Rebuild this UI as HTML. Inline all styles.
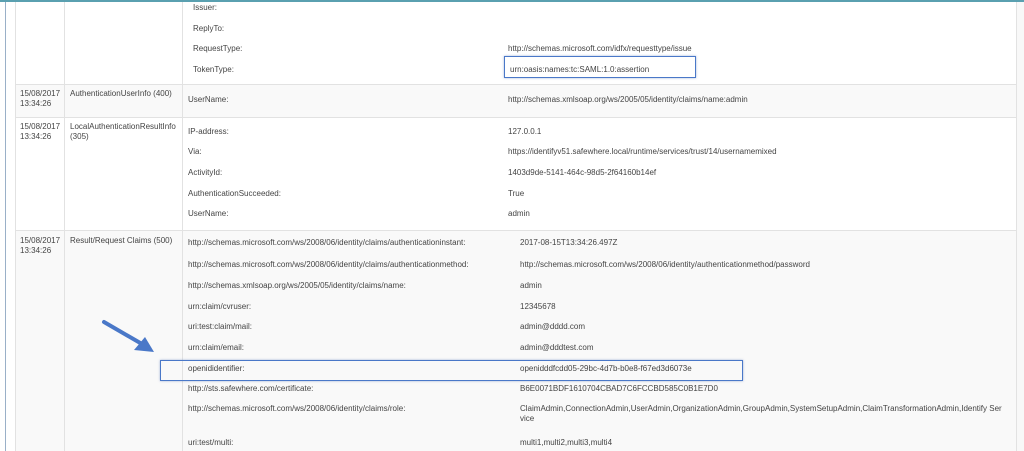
<!DOCTYPE html>
<html><head><meta charset="utf-8"><style>
body{margin:0;width:1024px;height:451px;overflow:hidden;background:#fff;font-family:"Liberation Sans",sans-serif;font-size:8px;color:#444;position:relative}
.a{position:absolute;white-space:nowrap;line-height:10px}
.bg{position:absolute}
.hl{position:absolute;height:1px;background:#e2e2e2;left:15px;width:1001px}
.vl{position:absolute;width:1px;background:#e2e2e2}
.box{position:absolute;border:1.5px solid #4a78c8;box-shadow:0 0 2px rgba(60,100,180,.5)}
</style></head><body>
<div class="bg" style="left:0;top:0;width:1024px;height:2px;background:#5aa0b0"></div>
<div class="bg" style="left:1016px;top:2px;width:8px;height:449px;background:#f8f8f8"></div>
<div class="bg" style="left:5px;top:2px;width:1px;height:449px;background:#9ab0c8"></div>
<div class="bg" style="left:15px;top:84px;width:1001px;height:33px;background:#f9f9f9"></div>
<div class="bg" style="left:15px;top:230px;width:1001px;height:221px;background:#f9f9f9"></div>
<div class="hl" style="top:84px"></div><div class="hl" style="top:117px"></div><div class="hl" style="top:230px"></div>
<div class="vl" style="left:15px;top:2px;height:449px"></div>
<div class="vl" style="left:64px;top:2px;height:449px"></div>
<div class="vl" style="left:182px;top:2px;height:449px"></div>
<div class="vl" style="left:1016px;top:2px;height:449px"></div>

<div class="a" style="left:193px;top:3px">Issuer:</div>
<div class="a" style="left:193px;top:24px">ReplyTo:</div>
<div class="a" style="left:193px;top:44px">RequestType:</div>
<div class="a" style="left:508px;top:44px">http://schemas.microsoft.com/idfx/requesttype/issue</div>
<div class="a" style="left:193px;top:65px">TokenType:</div>
<div class="a" style="left:510px;top:65px">urn:oasis:names:tc:SAML:1.0:assertion</div>

<div class="a" style="left:20px;top:89px">15/08/2017<br>13:34:26</div>
<div class="a" style="left:70px;top:89px">AuthenticationUserInfo (400)</div>
<div class="a" style="left:188px;top:95px">UserName:</div>
<div class="a" style="left:508px;top:95px">http://schemas.xmlsoap.org/ws/2005/05/identity/claims/name:admin</div>

<div class="a" style="left:20px;top:122px">15/08/2017<br>13:34:26</div>
<div class="a" style="left:70px;top:122px">LocalAuthenticationResultInfo<br>(305)</div>
<div class="a" style="left:188px;top:127px">IP-address:</div><div class="a" style="left:508px;top:127px">127.0.0.1</div>
<div class="a" style="left:188px;top:147px">Via:</div><div class="a" style="left:508px;top:147px">https://identifyv51.safewhere.local/runtime/services/trust/14/usernamemixed</div>
<div class="a" style="left:188px;top:168px">ActivityId:</div><div class="a" style="left:508px;top:168px">1403d9de-5141-464c-98d5-2f64160b14ef</div>
<div class="a" style="left:188px;top:189px">AuthenticationSucceeded:</div><div class="a" style="left:508px;top:189px">True</div>
<div class="a" style="left:188px;top:209px">UserName:</div><div class="a" style="left:508px;top:209px">admin</div>

<div class="a" style="left:20px;top:236px">15/08/2017<br>13:34:26</div>
<div class="a" style="left:70px;top:236px">Result/Request Claims (500)</div>
<div class="a" style="left:188px;top:238px">http://schemas.microsoft.com/ws/2008/06/identity/claims/authenticationinstant:</div><div class="a" style="left:520px;top:238px">2017-08-15T13:34:26.497Z</div>
<div class="a" style="left:188px;top:260px">http://schemas.microsoft.com/ws/2008/06/identity/claims/authenticationmethod:</div><div class="a" style="left:520px;top:260px">http://schemas.microsoft.com/ws/2008/06/identity/authenticationmethod/password</div>
<div class="a" style="left:188px;top:281px">http://schemas.xmlsoap.org/ws/2005/05/identity/claims/name:</div><div class="a" style="left:520px;top:281px">admin</div>
<div class="a" style="left:188px;top:302px">urn:claim/cvruser:</div><div class="a" style="left:520px;top:302px">12345678</div>
<div class="a" style="left:188px;top:322px">uri:test:claim/mail:</div><div class="a" style="left:520px;top:322px">admin@dddd.com</div>
<div class="a" style="left:188px;top:343px">urn:claim/email:</div><div class="a" style="left:520px;top:343px">admin@dddtest.com</div>
<div class="a" style="left:188px;top:364px">openididentifier:</div><div class="a" style="left:520px;top:364px">openidddfcdd05-29bc-4d7b-b0e8-f67ed3d6073e</div>
<div class="a" style="left:188px;top:384px">http://sts.safewhere.com/certificate:</div><div class="a" style="left:520px;top:384px">B6E0071BDF1610704CBAD7C6FCCBD585C0B1E7D0</div>
<div class="a" style="left:188px;top:404px">http://schemas.microsoft.com/ws/2008/06/identity/claims/role:</div><div class="a" style="left:520px;top:404px">ClaimAdmin,ConnectionAdmin,UserAdmin,OrganizationAdmin,GroupAdmin,SystemSetupAdmin,ClaimTransformationAdmin,Identify Ser<br>vice</div>
<div class="a" style="left:188px;top:438px">uri:test/multi:</div><div class="a" style="left:520px;top:438px">multi1,multi2,multi3,multi4</div>

<div class="box" style="left:504px;top:56px;width:190px;height:20px"></div>
<div class="box" style="left:160px;top:360px;width:581px;height:19px"></div>
<svg style="position:absolute;left:0;top:0" width="1024" height="451"><line x1="104" y1="322" x2="142" y2="344" stroke="#4a78c8" stroke-width="4" stroke-linecap="round"/><polygon points="154,352 134,350 145,337" fill="#4a78c8"/></svg>
</body></html>
